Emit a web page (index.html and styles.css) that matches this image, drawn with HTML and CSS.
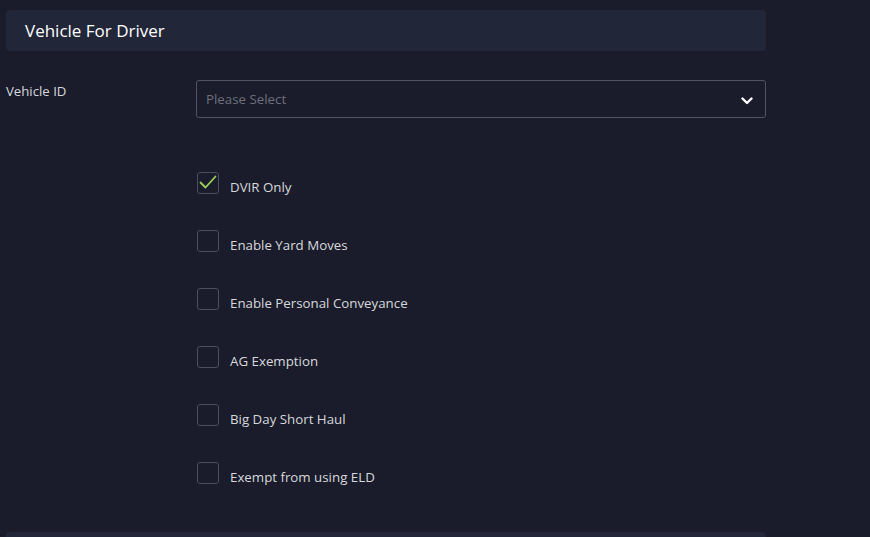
FILE: index.html
```html
<!DOCTYPE html>
<html>
<head>
<meta charset="utf-8">
<link rel="stylesheet" href="styles.css">
</head>
<body>
<div class="page">
  <div class="panel-head"><h2 class="title">Vehicle For Driver</h2></div>
  <div class="field">
    <label class="field-label">Vehicle ID</label>
    <div class="select">
      <span class="placeholder">Please Select</span>
      <svg class="chev" width="12" height="8" viewBox="0 0 12 8"><path d="M1.5 1.5 L6 6 L10.5 1.5" fill="none" stroke="#ffffff" stroke-width="2.4" stroke-linecap="round" stroke-linejoin="round"/></svg>
    </div>
  </div>
  <div class="checks">
    <div class="check-row"><span class="box"><svg width="22" height="22" viewBox="0 0 22 22"><path d="M3.5 10.5 L8.5 15.5 L18.5 4.5" fill="none" stroke="#9bd15a" stroke-width="1.8" stroke-linecap="round" stroke-linejoin="round"/></svg></span><span class="check-label">DVIR Only</span></div>
    <div class="check-row"><span class="box"></span><span class="check-label">Enable Yard Moves</span></div>
    <div class="check-row"><span class="box"></span><span class="check-label">Enable Personal Conveyance</span></div>
    <div class="check-row"><span class="box"></span><span class="check-label">AG Exemption</span></div>
    <div class="check-row"><span class="box"></span><span class="check-label">Big Day Short Haul</span></div>
    <div class="check-row"><span class="box"></span><span class="check-label">Exempt from using ELD</span></div>
  </div>
  <div class="panel-foot"></div>
</div>
</body>
</html>
```
FILE: styles.css
```css
html, body {
  margin: 0;
  padding: 0;
  background: #1a1c2b;
  font-family: "Open Sans", "Noto Sans", sans-serif;
  color: #d7d8dc;
  overflow: hidden;
}
.page {
  width: 760px;
  padding: 10px 0 0 6px;
}
.panel-head {
  height: 41px;
  background: #212638;
  border-radius: 4px;
  display: flex;
  align-items: center;
  padding-left: 19px;
}
.title {
  margin: 0;
  font-size: 17px;
  font-weight: 500;
  color: #ffffff;
  line-height: 20px;
  padding-top: 1px;
}
.field {
  display: flex;
  margin-top: 29px;
}
.field-label {
  width: 190px;
  font-size: 13.2px;
  line-height: 18px;
  margin-top: 2px;
  color: #d7d8dc;
}
.select {
  flex: 1;
  height: 36px;
  border: 1px solid #51545f;
  border-radius: 3px;
  display: flex;
  align-items: center;
  justify-content: space-between;
  padding: 0 12px 0 9px;
}
.placeholder {
  font-size: 13.3px;
  line-height: 18px;
  color: #6c6f7c;
}
.chev {
  display: block;
  margin-top: 3px;
}
.checks {
  padding-left: 191px;
  margin-top: 54px;
}
.check-row {
  display: flex;
  align-items: flex-start;
  height: 58px;
}
.box {
  width: 20px;
  height: 20px;
  border: 1px solid #4b4e5b;
  border-radius: 3px;
  position: relative;
  flex: none;
}
.box svg {
  position: absolute;
  left: -1px;
  top: -1px;
}
.check-label {
  margin-left: 11px;
  margin-top: 6px;
  font-size: 13.3px;
  line-height: 18px;
  color: #d7d8dc;
}
.panel-foot {
  height: 30px;
  background: #212638;
  border-radius: 4px;
  margin-top: 12px;
}
```
